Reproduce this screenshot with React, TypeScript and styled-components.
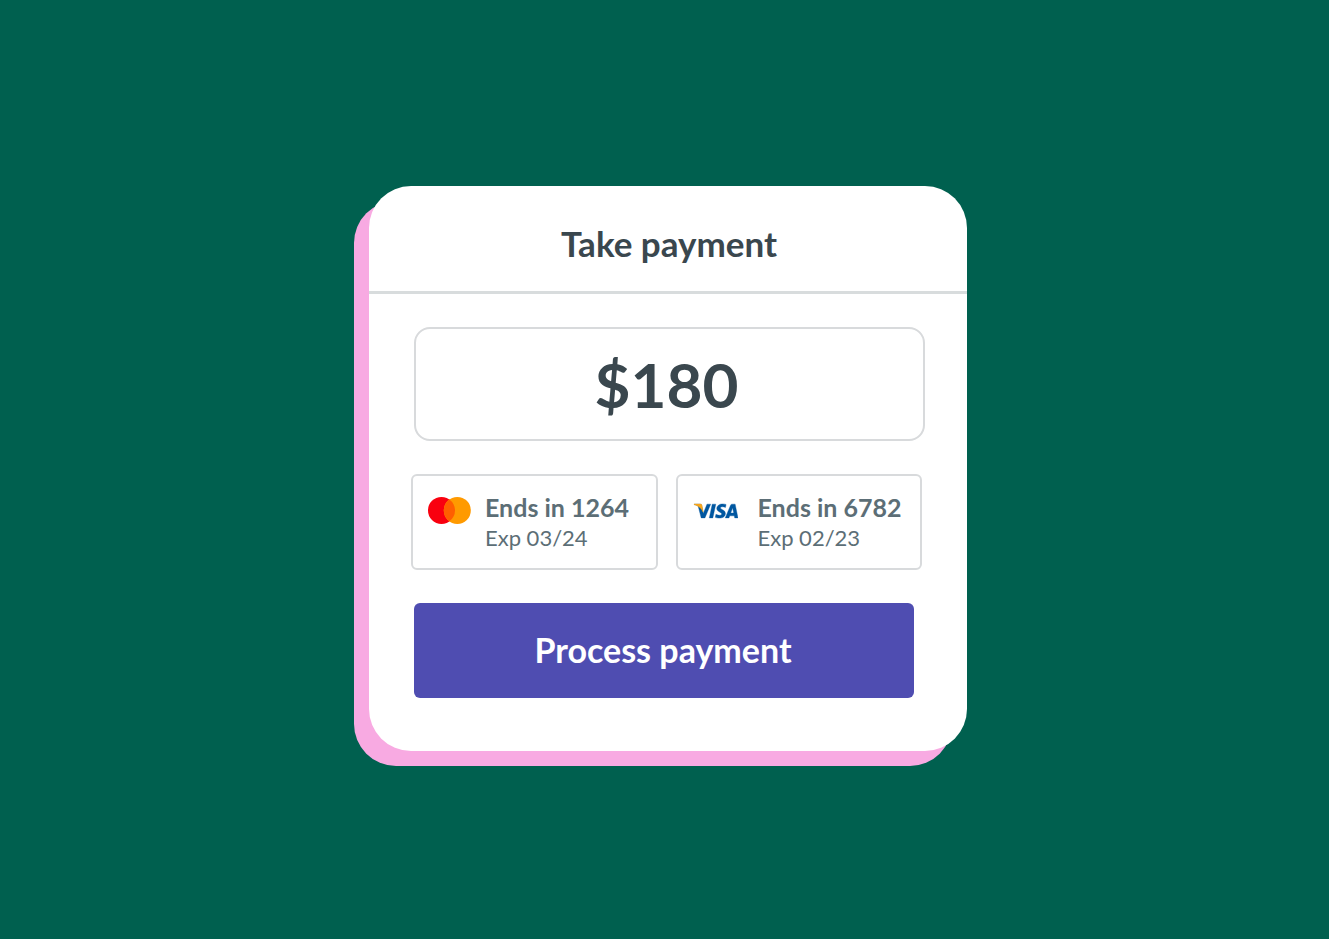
import React, { useState } from "react";
import styled, { createGlobalStyle } from "styled-components";
import { SiVisa } from "react-icons/si";

const GlobalStyle = createGlobalStyle`
  *, *::before, *::after { box-sizing: border-box; }
  body {
    margin: 0;
    background: #00604f;
    font-family: Lato, "Open Sans", sans-serif;
  }
  button, input { font-family: inherit; margin: 0; }
`;

const Page = styled.main`
  display: flex;
  align-items: center;
  justify-content: center;
  min-height: 100vh;
  padding: 16px 16px 18px 23px;
`;

const Card = styled.form`
  width: 100%;
  max-width: 598px;
  background: #ffffff;
  border-radius: 42px;
  box-shadow: -15px 15px 0 #f8aae2;
`;

const Header = styled.header`
  padding: 35px 22px 26px 24px;
  border-bottom: 3px solid #d8dcdd;
`;

const Title = styled.h1`
  margin: 0;
  font-size: 35px;
  line-height: 44px;
  font-weight: 700;
  text-align: center;
  color: #3a474e;
`;

const Body = styled.div`
  display: flex;
  flex-direction: column;
  gap: 33px;
  padding: 33px 42px 53px;
`;

const Amount = styled.input`
  height: 114px;
  margin-left: 3px;
  padding: 0 6px 0 0;
  border: 2px solid #d8dadc;
  border-radius: 16px;
  background: #ffffff;
  color: #3a474e;
  font-size: 62px;
  font-weight: 700;
  text-align: center;
`;

const Methods = styled.div`
  display: grid;
  grid-template-columns: 1fr 1fr;
  gap: 18px;
  margin-right: 3px;
`;

const Method = styled.button<{ $gap: number }>`
  display: flex;
  align-items: flex-start;
  gap: ${({ $gap }) => $gap}px;
  height: 96px;
  padding: 16px 14px;
  border: 2px solid #d8dadc;
  border-radius: 6px;
  background: #ffffff;
  color: #5c6e76;
  text-align: left;
  cursor: pointer;
`;

const Logo = styled.span`
  display: flex;
  flex: none;
  padding-top: 4px;
`;

const Details = styled.span`
  display: flex;
  flex-direction: column;
  white-space: nowrap;
`;

const Ending = styled.strong`
  font-size: 25px;
  line-height: 31px;
  font-weight: 700;
`;

const Expiry = styled.span`
  font-size: 22px;
  line-height: 30px;
`;

const Submit = styled.button`
  height: 95px;
  margin: 0 11px 0 3px;
  padding: 0 2px 2px 0;
  border: 0;
  border-radius: 6px;
  background: #4f4db1;
  color: #ffffff;
  font-size: 34px;
  font-weight: 700;
  cursor: pointer;
`;

function MastercardLogo() {
  return (
    <svg width="44" height="28" viewBox="0 0 44 28" role="img" aria-label="Mastercard">
      <circle cx="14.5" cy="14.4" r="13.5" fill="#f9000f" />
      <circle cx="30.3" cy="14.4" r="13.5" fill="#ff9a00" />
      <path d="M22.4 3.45a13.5 13.5 0 0 1 0 21.9a13.5 13.5 0 0 1 0-21.9z" fill="#ff5f00" />
    </svg>
  );
}

function VisaLogo() {
  return (
    <svg width="46" height="28" viewBox="0 0 46 28" role="img" aria-label="Visa">
      <SiVisa x="2" y="-7" size={44} color="#0057a0" stroke="#0057a0" strokeWidth={0.2} />
      <path
        transform="translate(2 -7) scale(1.8333)"
        d="M0 8.479l.046-.317h3.3a.904.904 0 0 1 .994.764l.7 3.7C4.2 10.7 2.6 9.2 0 8.479z"
        fill="#faa61a"
        stroke="#faa61a"
        strokeWidth={0.2}
      />
    </svg>
  );
}

export default function App() {
  const [amount, setAmount] = useState("$180");

  return (
    <>
      <GlobalStyle />
      <Page>
        <Card onSubmit={(event) => event.preventDefault()}>
          <Header>
            <Title>Take payment</Title>
          </Header>
          <Body>
            <Amount
              type="text"
              size={1}
              aria-label="Amount"
              value={amount}
              onChange={(event) => setAmount(event.target.value)}
            />
            <Methods>
              <Method type="button" $gap={14}>
                <Logo>
                  <MastercardLogo />
                </Logo>
                <Details>
                  <Ending>Ends in 1264</Ending>
                  <Expiry>Exp 03/24</Expiry>
                </Details>
              </Method>
              <Method type="button" $gap={20}>
                <Logo>
                  <VisaLogo />
                </Logo>
                <Details>
                  <Ending>Ends in 6782</Ending>
                  <Expiry>Exp 02/23</Expiry>
                </Details>
              </Method>
            </Methods>
            <Submit type="submit">Process payment</Submit>
          </Body>
        </Card>
      </Page>
    </>
  );
}
